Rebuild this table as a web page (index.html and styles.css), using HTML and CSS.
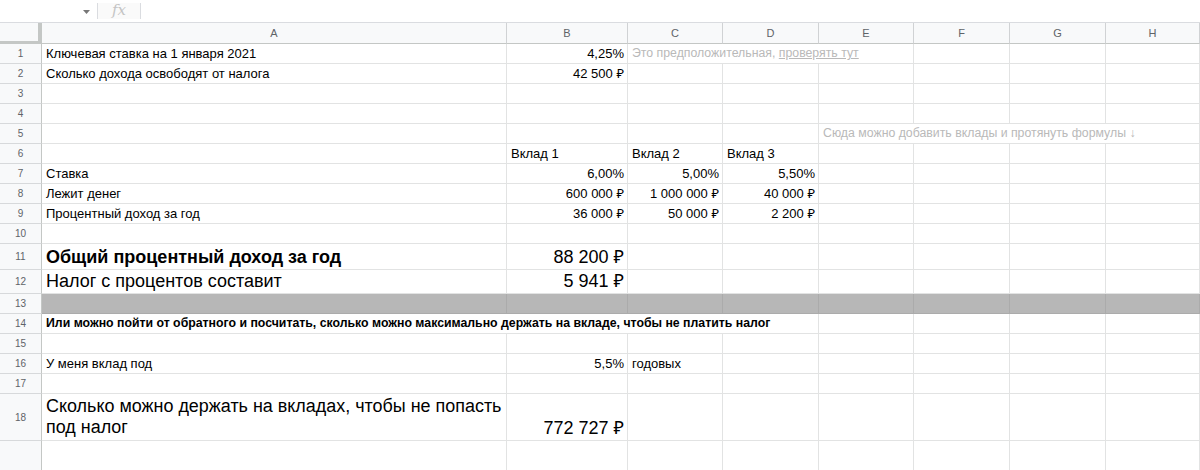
FILE: index.html
```html
<!DOCTYPE html>
<html lang="ru">
<head>
<meta charset="utf-8">
<title>Вклады и налог</title>
<link rel="stylesheet" href="styles.css">
</head>
<body>
<div class="toolbar">
  <div class="namebox"><svg class="caret" width="7" height="4" viewBox="0 0 7 4"><path d="M0 0h7L3.5 4z" fill="#777"/></svg></div>
  <div class="fxbox"><span class="fx">fx</span></div>
</div>
<div class="sheet">
  <div class="row head">
    <div class="corner"></div>
    <div class="colh">A</div><div class="colh">B</div><div class="colh">C</div><div class="colh">D</div>
    <div class="colh">E</div><div class="colh">F</div><div class="colh">G</div><div class="colh">H</div>
  </div>

  <div class="row">
    <div class="rh">1</div>
    <div class="c">Ключевая ставка на 1 января 2021</div>
    <div class="c r">4,25%</div>
    <div class="c note s3">Это предположительная,&nbsp;<span class="link">проверять тут</span></div>
    <div class="c"></div><div class="c"></div><div class="c"></div>
  </div>

  <div class="row">
    <div class="rh">2</div>
    <div class="c">Сколько дохода освободят от налога</div>
    <div class="c r">42 500 ₽</div>
    <div class="c"></div><div class="c"></div><div class="c"></div><div class="c"></div><div class="c"></div><div class="c"></div>
  </div>

  <div class="row">
    <div class="rh">3</div>
    <div class="c"></div><div class="c"></div><div class="c"></div><div class="c"></div><div class="c"></div><div class="c"></div><div class="c"></div><div class="c"></div>
  </div>

  <div class="row">
    <div class="rh">4</div>
    <div class="c"></div><div class="c"></div><div class="c"></div><div class="c"></div><div class="c"></div><div class="c"></div><div class="c"></div><div class="c"></div>
  </div>

  <div class="row">
    <div class="rh">5</div>
    <div class="c"></div><div class="c"></div><div class="c"></div><div class="c"></div>
    <div class="c note s4">Сюда можно добавить вклады и протянуть формулы ↓</div>
  </div>

  <div class="row">
    <div class="rh">6</div>
    <div class="c"></div>
    <div class="c">Вклад 1</div><div class="c">Вклад 2</div><div class="c">Вклад 3</div>
    <div class="c"></div><div class="c"></div><div class="c"></div><div class="c"></div>
  </div>

  <div class="row">
    <div class="rh">7</div>
    <div class="c">Ставка</div>
    <div class="c r">6,00%</div><div class="c r">5,00%</div><div class="c r">5,50%</div>
    <div class="c"></div><div class="c"></div><div class="c"></div><div class="c"></div>
  </div>

  <div class="row">
    <div class="rh">8</div>
    <div class="c">Лежит денег</div>
    <div class="c r">600 000 ₽</div><div class="c r">1 000 000 ₽</div><div class="c r">40 000 ₽</div>
    <div class="c"></div><div class="c"></div><div class="c"></div><div class="c"></div>
  </div>

  <div class="row">
    <div class="rh">9</div>
    <div class="c">Процентный доход за год</div>
    <div class="c r">36 000 ₽</div><div class="c r">50 000 ₽</div><div class="c r">2 200 ₽</div>
    <div class="c"></div><div class="c"></div><div class="c"></div><div class="c"></div>
  </div>

  <div class="row">
    <div class="rh">10</div>
    <div class="c"></div><div class="c"></div><div class="c"></div><div class="c"></div><div class="c"></div><div class="c"></div><div class="c"></div><div class="c"></div>
  </div>

  <div class="row h26">
    <div class="rh">11</div>
    <div class="c big b">Общий процентный доход за год</div>
    <div class="c big r">88 200 ₽</div>
    <div class="c"></div><div class="c"></div><div class="c"></div><div class="c"></div><div class="c"></div><div class="c"></div>
  </div>

  <div class="row h24">
    <div class="rh">12</div>
    <div class="c big">Налог с процентов составит</div>
    <div class="c big r">5 941 ₽</div>
    <div class="c"></div><div class="c"></div><div class="c"></div><div class="c"></div><div class="c"></div><div class="c"></div>
  </div>

  <div class="row fill">
    <div class="rh">13</div>
    <div class="c"></div><div class="c"></div><div class="c"></div><div class="c"></div><div class="c"></div><div class="c"></div><div class="c"></div><div class="c"></div>
  </div>

  <div class="row">
    <div class="rh">14</div>
    <div class="c small b s4">Или можно пойти от обратного и посчитать, сколько можно максимально держать на вкладе, чтобы не платить налог</div>
    <div class="c"></div><div class="c"></div><div class="c"></div><div class="c"></div>
  </div>

  <div class="row">
    <div class="rh">15</div>
    <div class="c"></div><div class="c"></div><div class="c"></div><div class="c"></div><div class="c"></div><div class="c"></div><div class="c"></div><div class="c"></div>
  </div>

  <div class="row">
    <div class="rh">16</div>
    <div class="c">У меня вклад под</div>
    <div class="c r">5,5%</div>
    <div class="c">годовых</div>
    <div class="c"></div><div class="c"></div><div class="c"></div><div class="c"></div><div class="c"></div>
  </div>

  <div class="row">
    <div class="rh">17</div>
    <div class="c"></div><div class="c"></div><div class="c"></div><div class="c"></div><div class="c"></div><div class="c"></div><div class="c"></div><div class="c"></div>
  </div>

  <div class="row h47">
    <div class="rh">18</div>
    <div class="c big wrap">Сколько можно держать на вкладах, чтобы не попасть под налог</div>
    <div class="c big r">772 727 ₽</div>
    <div class="c"></div><div class="c"></div><div class="c"></div><div class="c"></div><div class="c"></div><div class="c"></div>
  </div>

  <div class="row h60">
    <div class="rh"></div>
    <div class="c"></div><div class="c"></div><div class="c"></div><div class="c"></div><div class="c"></div><div class="c"></div><div class="c"></div><div class="c"></div>
  </div>
</div>
</body>
</html>
```

FILE: styles.css
```css
* { box-sizing: border-box; }
html, body { margin: 0; padding: 0; background: #fff; }
body {
  font-family: "Liberation Sans", Arial, "Noto Sans", sans-serif;
  color: #000;
  overflow: hidden;
  width: 1200px;
  height: 470px;
}

.toolbar {
  height: 22px;
  display: flex;
  align-items: stretch;
  background: #fff;
}
.namebox {
  width: 97px;
  display: flex;
  align-items: center;
  justify-content: flex-end;
  padding-right: 7px;
  padding-top: 2px;
}
.fxbox {
  width: 44px;
  margin: 3px 0 3px 0;
  border-left: 1px solid #dadce0;
  border-right: 1px solid #dadce0;
  background: #fafafa;
  display: flex;
  align-items: center;
  justify-content: center;
}
.fx {
  font-family: "DejaVu Serif", "Liberation Serif", serif;
  font-style: italic;
  font-size: 15px;
  color: #c4c4c4;
  line-height: 1;
  margin-top: -2px;
}

.sheet { display: flex; flex-direction: column; }

.row {
  display: grid;
  grid-template-columns: 42px 465px 121px 95px 96px 95px 96px 96px 94px;
  height: 20px;
}
.row.h24 { height: 24px; }
.row.h26 { height: 26px; }
.row.h47 { height: 47px; }
.row.h60 { height: 60px; }

.head { height: 22px; border-top: 1px solid #dadce0; }
.corner {
  background: #f8f9fa;
  border-right: 4px solid #c4c7c5;
  border-bottom: 3px solid #c4c7c5;
}
.colh {
  background: #f8f9fa;
  border-right: 1px solid #d0d2d4;
  border-bottom: 1px solid #c4c7c5;
  color: #5f6368;
  font-size: 11px;
  display: flex;
  align-items: center;
  justify-content: center;
}

.rh {
  background: #f8f9fa;
  border-right: 1px solid #c4c7c5;
  border-bottom: 1px solid #d7d9db;
  color: #5f6368;
  font-size: 10px;
  display: flex;
  align-items: center;
  justify-content: center;
}

.c {
  border-right: 1px solid #e2e3e3;
  border-bottom: 1px solid #e2e3e3;
  font-size: 13px;
  line-height: 15px;
  padding: 0 3px 2px 4px;
  display: flex;
  align-items: flex-end;
  white-space: nowrap;
  overflow: hidden;
}
.c.r { justify-content: flex-end; }
.c.b { font-weight: bold; }
.c.big { font-size: 18px; line-height: 21px; padding-bottom: 1px; }
.c.small { font-size: 12.3px; line-height: 14px; padding-bottom: 3px; }
.c.wrap {
  white-space: normal;
  padding-bottom: 2px;
  padding-right: 0;
  font-size: 17.95px;
}
.c.s3 { grid-column: span 3; }
.c.s4 { grid-column: span 4; }

.note { color: #b9b9b9; font-size: 12.3px; }
.link { text-decoration: underline; }

.fill .c {
  background: #b7b7b7;
  border-right-color: #ababab;
  border-bottom-color: #ababab;
}
```
